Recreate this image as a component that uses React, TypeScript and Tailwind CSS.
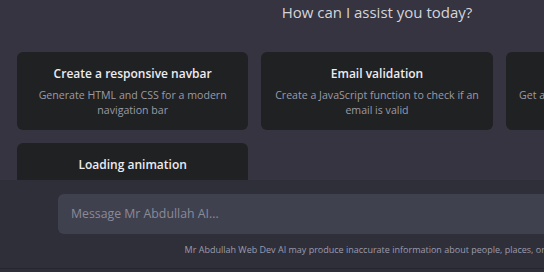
import React from 'react';

const suggestions = [
  { title: 'Create a responsive navbar', desc: 'Generate HTML and CSS for a modern navigation bar' },
  { title: 'Email validation', desc: 'Create a JavaScript function to check if an email is valid' },
  { title: 'Fetch API example', desc: 'Get a code example of fetching data from an API' },
  { title: 'Loading animation', desc: 'Build a CSS spinner for loading states' },
];

const App: React.FC = () => {
  return (
    <div className="h-[272px] w-[544px] overflow-hidden bg-[#353440] font-['Open_Sans',sans-serif]">
      <div className="flex h-full w-[754px] flex-col">
        {/* Greeting + suggestions */}
        <div className="flex h-[180px] flex-col overflow-hidden">
          <h1 className="pt-[1px] text-center text-[15px] leading-[22px] text-[#d4d4dc]">How can I assist you today?</h1>
          <div className="mt-[29px] grid grid-cols-3 gap-[13px] px-[17px]">
            {suggestions.map((s) => (
              <button
                key={s.title}
                className="flex h-[78px] flex-col items-center rounded-md bg-[#202123] px-[10px] pt-[13px] text-center"
              >
                <span className="text-[12px] font-semibold leading-[17px] text-[#ececf1]">{s.title}</span>
                <span className="mt-[6px] text-[10.6px] leading-[15px] text-[#9b9ba6]">{s.desc}</span>
              </button>
            ))}
          </div>
        </div>

        {/* Input area */}
        <div className="flex flex-1 flex-col bg-[#2f2f3a] pt-[14px]">
          <div className="mx-[58px] flex h-[40px] items-center rounded-md bg-[#40414f] px-[13px]">
            <input
              className="w-full bg-transparent text-[12.3px] text-[#8e8ea0] outline-none placeholder:text-[#8a8a99]"
              placeholder="Message Mr Abdullah AI..."
            />
          </div>
          <p className="mt-[10px] text-center text-[9px] leading-[12px] text-[#9b9bae]">
            Mr Abdullah Web Dev AI may produce inaccurate information about people, places, or facts.
          </p>
          <div className="mt-auto h-[4px] border-t border-[#26262f]" />
        </div>
      </div>
    </div>
  );
};

export default App;
